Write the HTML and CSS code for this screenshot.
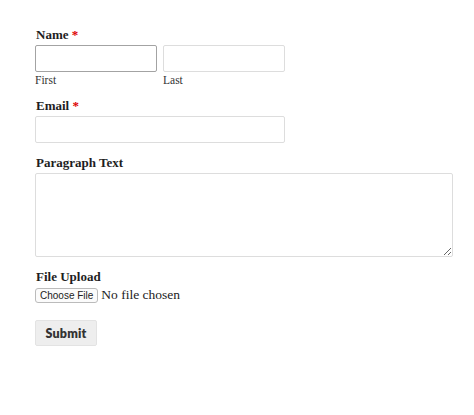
FILE: index.html
```html
<!DOCTYPE html>
<html lang="en">
<head>
<meta charset="utf-8">
<link rel="stylesheet" href="styles.css">
</head>
<body>
<form class="form">
  <div class="field field-name">
    <div class="label">Name <span class="req">*</span></div>
    <div class="name-row">
      <div class="sub">
        <input class="input input-focus" type="text">
        <div class="sublabel">First</div>
      </div>
      <div class="sub">
        <input class="input" type="text">
        <div class="sublabel">Last</div>
      </div>
    </div>
  </div>
  <div class="field">
    <div class="label">Email <span class="req">*</span></div>
    <input class="input input-wide" type="email">
  </div>
  <div class="field">
    <div class="label">Paragraph Text</div>
    <textarea class="textarea"></textarea>
  </div>
  <div class="field">
    <div class="label">File Upload</div>
    <input class="file" type="file">
  </div>
  <button class="submit" type="button">Submit</button>
</form>
</body>
</html>
```
FILE: styles.css
```css
html, body {
  margin: 0;
  padding: 0;
  background: #fff;
}
body {
  font-family: "Liberation Serif", serif;
  color: #222;
}
.form {
  padding: 26px 0 0 35px;
  width: 418px;
}
.field {
  margin-bottom: 11px;
}
.field-name {
  margin-bottom: 10px;
}
.label {
  font-weight: bold;
  font-size: 13px;
  line-height: 17px;
  margin: 0 0 2px 1px;
  color: #1e1e1e;
}
.req {
  color: #d00;
}
.name-row {
  display: flex;
  gap: 6px;
}
.sub {
  width: 122px;
}
.input {
  display: block;
  box-sizing: border-box;
  width: 122px;
  height: 27px;
  border: 1px solid #ddd;
  border-radius: 2px;
  background: #fff;
  margin: 0;
  padding: 0;
}
.input-focus {
  border-color: #a3a3a3;
}
.input-wide {
  width: 250px;
}
.sublabel {
  font-size: 11.5px;
  line-height: 14px;
  margin-top: 1px;
  color: #333;
}
.textarea {
  display: block;
  box-sizing: border-box;
  width: 418px;
  height: 84px;
  border: 1px solid #ddd;
  border-radius: 2px;
  margin: 0;
  padding: 0;
}
.file {
  display: block;
  font-family: "Liberation Serif", serif;
  font-size: 13.5px;
  color: #222;
  margin: 2px 0 0 0;
}
.file::file-selector-button {
  font-family: "Liberation Sans", sans-serif;
  font-size: 10px;
  color: #222;
  background: #fbfbfb;
  border: 1px solid #bbb;
  border-radius: 3px;
  padding: 1px 4px;
  margin-right: 3px;
}
.submit {
  display: block;
  margin-top: 17px;
  width: 62px;
  height: 26px;
  background: #eee;
  border: 1px solid #e3e3e3;
  border-radius: 2px;
  font-family: "Lato", sans-serif;
  font-weight: 800;
  font-size: 12.5px;
  letter-spacing: 0.2px;
  color: #333;
  padding: 0;
}
```
